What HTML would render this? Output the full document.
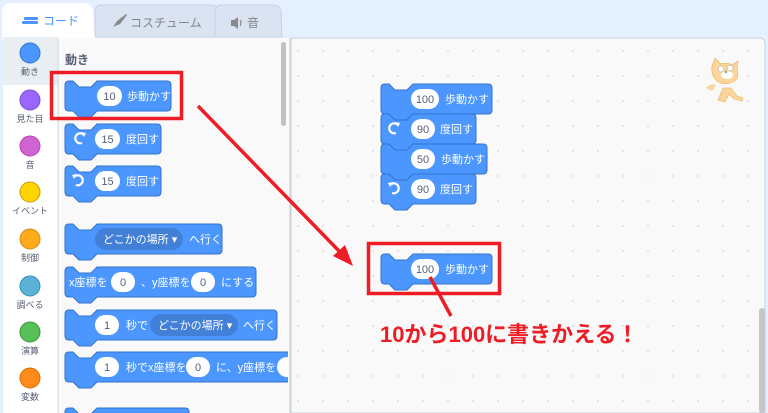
<!DOCTYPE html>
<html><head><meta charset="utf-8"><style>
html,body{margin:0;padding:0;width:768px;height:413px;overflow:hidden;background:#e5f0ff}
svg{display:block;position:absolute;left:0;top:0}
text{font-family:"Liberation Sans","Noto Sans CJK JP",sans-serif}
</style></head><body>
<svg width="768" height="413" viewBox="0 0 768 413" xmlns="http://www.w3.org/2000/svg">
<defs>
<pattern id="dots" x="290" y="38" width="25" height="25" patternUnits="userSpaceOnUse">
<circle cx="8" cy="13" r="0.9" fill="#d4d4d4"/></pattern>
<clipPath id="fly"><rect x="58" y="38" width="230" height="375"/></clipPath>
</defs>
<rect width="768" height="413" fill="#e5f0ff"/>
<path d="M95,37 V12 Q95,5 102,5 H210 Q218,5 220,12 L222,37 Z" fill="#d9e3f2" stroke="#c6d0de"/>
<path d="M215,37 V12 Q215,5 222,5 H272 Q280,5 281,12 L282,37 Z" fill="#d9e3f2" stroke="#c6d0de"/>
<path d="M2,40 V12 Q2,3 11,3 H84 Q92,3 93,12 L95,40 Z" fill="#ffffff"/>
<g fill="#4c97ff"><rect x="24" y="17" width="14" height="3" rx="1"/><rect x="22" y="21" width="16" height="3" rx="1"/></g>
<text x="43" y="25" font-size="12" fill="#4c97ff">コード</text>
<path d="M113,27 l4,-6 l9,-7 l1,1 l-7,9 z" fill="#8a8a8a"/>
<text x="130" y="27" font-size="12" fill="#858585">コスチューム</text>
<path d="M231,20 h3 l4,-3 v12 l-4,-3 h-3 z" fill="#8a8a8a"/><path d="M240,20 q2,3 0,6" stroke="#8a8a8a" fill="none" stroke-width="1.2"/>
<text x="247" y="27" font-size="12" fill="#858585">音</text>
<rect x="3" y="37" width="55" height="376" fill="#ffffff"/>
<rect x="3" y="37" width="55" height="48" fill="#e9eef2"/>
<line x1="58" y1="37" x2="58" y2="413" stroke="#d9d9d9"/>
<g font-size="9" fill="#575e75" text-anchor="middle">
<circle cx="30" cy="53" r="10" fill="#4c97ff" stroke="#3373cc"/><text x="30" y="75">動き</text>
<circle cx="30" cy="100" r="10" fill="#9966ff" stroke="#774dcb"/><text x="30" y="122">見た目</text>
<circle cx="30" cy="146" r="10" fill="#cf63cf" stroke="#bd42bd"/><text x="30" y="168">音</text>
<circle cx="30" cy="192" r="10" fill="#ffd500" stroke="#cc9900"/><text x="30" y="214">イベント</text>
<circle cx="30" cy="239" r="10" fill="#ffab19" stroke="#cf8b17"/><text x="30" y="261">制御</text>
<circle cx="30" cy="286" r="10" fill="#5cb1d6" stroke="#2e8eb8"/><text x="30" y="308">調べる</text>
<circle cx="30" cy="332" r="10" fill="#59c059" stroke="#389438"/><text x="30" y="354">演算</text>
<circle cx="30" cy="378" r="10" fill="#ff8c1a" stroke="#db6e00"/><text x="30" y="400">変数</text>
</g>
<rect x="59" y="38" width="231" height="375" fill="#f9f9f9"/>
<rect x="281" y="42" width="5" height="84" rx="2.5" fill="#c1c1c1"/>
<line x1="290" y1="38" x2="290" y2="413" stroke="#d0d0d0"/>
<text x="65" y="64" font-size="12" font-weight="bold" fill="#575e75">動き</text>
<g clip-path="url(#fly)" font-size="11" fill="#fff">
<g transform="translate(65,81)"><path d="M0,4 Q0,0 4,0 H8 L14,6 H26 L32,0 H102 Q106,0 106,4 V26 Q106,30 102,30 H32 L26,36 H14 L8,30 H4 Q0,30 0,26 Z" fill="#4c97ff" stroke="#3373cc"/>
<rect x="32" y="5" width="25" height="20" rx="10" fill="#fff"/><text x="44.5" y="19" text-anchor="middle" fill="#575e75">10</text><text x="62" y="19">歩動かす</text></g>
<g transform="translate(65,124)"><path d="M0,4 Q0,0 4,0 H8 L14,6 H26 L32,0 H92 Q96,0 96,4 V26 Q96,30 92,30 H32 L26,36 H14 L8,30 H4 Q0,30 0,26 Z" fill="#4c97ff" stroke="#3373cc"/>
<path d="M17,19 a5,5 0 1 1 2,-8" stroke="#fff" stroke-width="2.2" fill="none"/><path d="M16,8 l5,1 l-2,4z" fill="#fff"/>
<rect x="30" y="5" width="25" height="20" rx="10" fill="#fff"/><text x="42.5" y="19" text-anchor="middle" fill="#575e75">15</text><text x="61" y="19">度回す</text></g>
<g transform="translate(65,166)"><path d="M0,4 Q0,0 4,0 H8 L14,6 H26 L32,0 H92 Q96,0 96,4 V26 Q96,30 92,30 H32 L26,36 H14 L8,30 H4 Q0,30 0,26 Z" fill="#4c97ff" stroke="#3373cc"/>
<path d="M11,19 a5,5 0 1 0 -2,-8" stroke="#fff" stroke-width="2.2" fill="none"/><path d="M12,8 l-5,1 l2,4z" fill="#fff"/>
<rect x="30" y="5" width="25" height="20" rx="10" fill="#fff"/><text x="42.5" y="19" text-anchor="middle" fill="#575e75">15</text><text x="61" y="19">度回す</text></g>
<g transform="translate(65,224)"><path d="M0,4 Q0,0 4,0 H8 L14,6 H26 L32,0 H153 Q157,0 157,4 V26 Q157,30 153,30 H32 L26,36 H14 L8,30 H4 Q0,30 0,26 Z" fill="#4c97ff" stroke="#3373cc"/>
<rect x="30" y="4" width="88" height="22" rx="11" fill="#4280d7"/><text x="38" y="19">どこかの場所 ▾</text><text x="124" y="19">へ行く</text></g>
<g transform="translate(65,267)"><path d="M0,4 Q0,0 4,0 H8 L14,6 H26 L32,0 H187 Q191,0 191,4 V26 Q191,30 187,30 H32 L26,36 H14 L8,30 H4 Q0,30 0,26 Z" fill="#4c97ff" stroke="#3373cc"/>
<text x="4" y="19">x座標を</text><rect x="46" y="5" width="24" height="20" rx="10" fill="#fff"/><text x="58" y="19" text-anchor="middle" fill="#575e75">0</text>
<text x="76" y="19">、y座標を</text><rect x="126" y="5" width="24" height="20" rx="10" fill="#fff"/><text x="138" y="19" text-anchor="middle" fill="#575e75">0</text><text x="156" y="19">にする</text></g>
<g transform="translate(65,310)"><path d="M0,4 Q0,0 4,0 H8 L14,6 H26 L32,0 H208 Q212,0 212,4 V26 Q212,30 208,30 H32 L26,36 H14 L8,30 H4 Q0,30 0,26 Z" fill="#4c97ff" stroke="#3373cc"/>
<rect x="30" y="5" width="24" height="20" rx="10" fill="#fff"/><text x="42" y="19" text-anchor="middle" fill="#575e75">1</text><text x="61" y="19">秒で</text>
<rect x="85" y="4" width="88" height="22" rx="11" fill="#4280d7"/><text x="93" y="19">どこかの場所 ▾</text><text x="178" y="19">へ行く</text></g>
<g transform="translate(65,352)"><path d="M0,4 Q0,0 4,0 H8 L14,6 H26 L32,0 H250 Q254,0 254,4 V26 Q254,30 250,30 H32 L26,36 H14 L8,30 H4 Q0,30 0,26 Z" fill="#4c97ff" stroke="#3373cc"/>
<rect x="30" y="5" width="24" height="20" rx="10" fill="#fff"/><text x="42" y="19" text-anchor="middle" fill="#575e75">1</text><text x="61" y="19">秒でx座標を</text>
<rect x="121" y="5" width="24" height="20" rx="10" fill="#fff"/><text x="133" y="19" text-anchor="middle" fill="#575e75">0</text><text x="151" y="19">に、y座標を</text>
<rect x="212" y="5" width="24" height="20" rx="10" fill="#fff"/></g>
<g transform="translate(65,408)"><path d="M0,4 Q0,0 4,0 H8 L14,6 H26 L32,0 H120 Q124,0 124,4 V6 H0 Z" fill="#4c97ff" stroke="#3373cc"/></g>
</g>
<path d="M291,38 H759 Q765,38 765,44 V413 H291 Z" fill="#f9f9f9" stroke="#c6d0de"/>
<rect x="291" y="39" width="474" height="374" fill="url(#dots)"/>
<rect x="759" y="308" width="6" height="105" rx="3" fill="#c6c6c6"/>
<g transform="translate(704,56)">
<path d="M14,44 l5,-12 l8,0 l6,8 l6,2 l-1,3 l-8,-2 l-5,-5 l-4,8 z" fill="#fbd59a" stroke="#e8b060" stroke-width="0.6"/>
<path d="M2,32 q4,-5 10,-3 l-4,6 z" fill="#fbd59a"/>
<path d="M8,10 l3,-8 l6,6 q6,-2 11,1 l6,-4 l-1,9 q3,8 -4,12 q-9,4 -16,-1 q-6,-5 -5,-15z" fill="#fbd59a" stroke="#e8b060" stroke-width="0.6"/>
<ellipse cx="23" cy="19" rx="6" ry="4" fill="#fff"/><circle cx="17" cy="13" r="3" fill="#fff" stroke="#888" stroke-width="0.4"/><circle cx="26" cy="12" r="3" fill="#fff" stroke="#888" stroke-width="0.4"/>
<circle cx="22" cy="16" r="1.2" fill="#999"/>
</g>
<g font-size="11" fill="#fff">
<g transform="translate(381,84)"><path d="M0,4 Q0,0 4,0 H8 L14,6 H26 L32,0 H107 Q111,0 111,4 V26 Q111,30 107,30 H32 L26,36 H14 L8,30 H4 Q0,30 0,26 Z" fill="#4c97ff" stroke="#3373cc"/>
<rect x="30" y="5" width="28" height="20" rx="10" fill="#fff"/><text x="44" y="19" text-anchor="middle" fill="#575e75">100</text><text x="64" y="19">歩動かす</text></g>
<g transform="translate(381,114)"><path d="M0,4 Q0,0 4,0 H8 L14,6 H26 L32,0 H91 Q95,0 95,4 V26 Q95,30 91,30 H32 L26,36 H14 L8,30 H4 Q0,30 0,26 Z" fill="#4c97ff" stroke="#3373cc"/>
<path d="M15,19 a5,5 0 1 1 2,-8" stroke="#fff" stroke-width="2.2" fill="none"/><path d="M14,8 l5,1 l-2,4z" fill="#fff"/>
<rect x="30" y="5" width="24" height="20" rx="10" fill="#fff"/><text x="42" y="19" text-anchor="middle" fill="#575e75">90</text><text x="59" y="19">度回す</text></g>
<g transform="translate(381,144)"><path d="M0,4 Q0,0 4,0 H8 L14,6 H26 L32,0 H102 Q106,0 106,4 V26 Q106,30 102,30 H32 L26,36 H14 L8,30 H4 Q0,30 0,26 Z" fill="#4c97ff" stroke="#3373cc"/>
<rect x="30" y="5" width="24" height="20" rx="10" fill="#fff"/><text x="42" y="19" text-anchor="middle" fill="#575e75">50</text><text x="60" y="19">歩動かす</text></g>
<g transform="translate(381,174)"><path d="M0,4 Q0,0 4,0 H8 L14,6 H26 L32,0 H91 Q95,0 95,4 V26 Q95,30 91,30 H32 L26,36 H14 L8,30 H4 Q0,30 0,26 Z" fill="#4c97ff" stroke="#3373cc"/>
<path d="M11,19 a5,5 0 1 0 -2,-8" stroke="#fff" stroke-width="2.2" fill="none"/><path d="M12,8 l-5,1 l2,4z" fill="#fff"/>
<rect x="30" y="5" width="24" height="20" rx="10" fill="#fff"/><text x="42" y="19" text-anchor="middle" fill="#575e75">90</text><text x="59" y="19">度回す</text></g>
<g transform="translate(381,254)"><path d="M0,4 Q0,0 4,0 H8 L14,6 H26 L32,0 H107 Q111,0 111,4 V26 Q111,30 107,30 H32 L26,36 H14 L8,30 H4 Q0,30 0,26 Z" fill="#4c97ff" stroke="#3373cc"/>
<rect x="30" y="5" width="28" height="20" rx="10" fill="#fff"/><text x="44" y="19" text-anchor="middle" fill="#575e75">100</text><text x="64" y="19">歩動かす</text></g>
</g>
<g stroke="#ee1c25" fill="none" stroke-width="3.5">
<rect x="51.5" y="72.5" width="130" height="46"/>
<rect x="368.5" y="243.5" width="131" height="50"/>
<line x1="198" y1="106" x2="340" y2="252"/>
<line x1="430" y1="277" x2="451" y2="316"/>
</g>
<path d="M353,266 L333,256 L345,245 Z" fill="#ee1c25"/>
<text x="380" y="342" font-size="22" font-weight="bold" fill="#ee1c25">10から100に書きかえる！</text>
</svg>
</body></html>
